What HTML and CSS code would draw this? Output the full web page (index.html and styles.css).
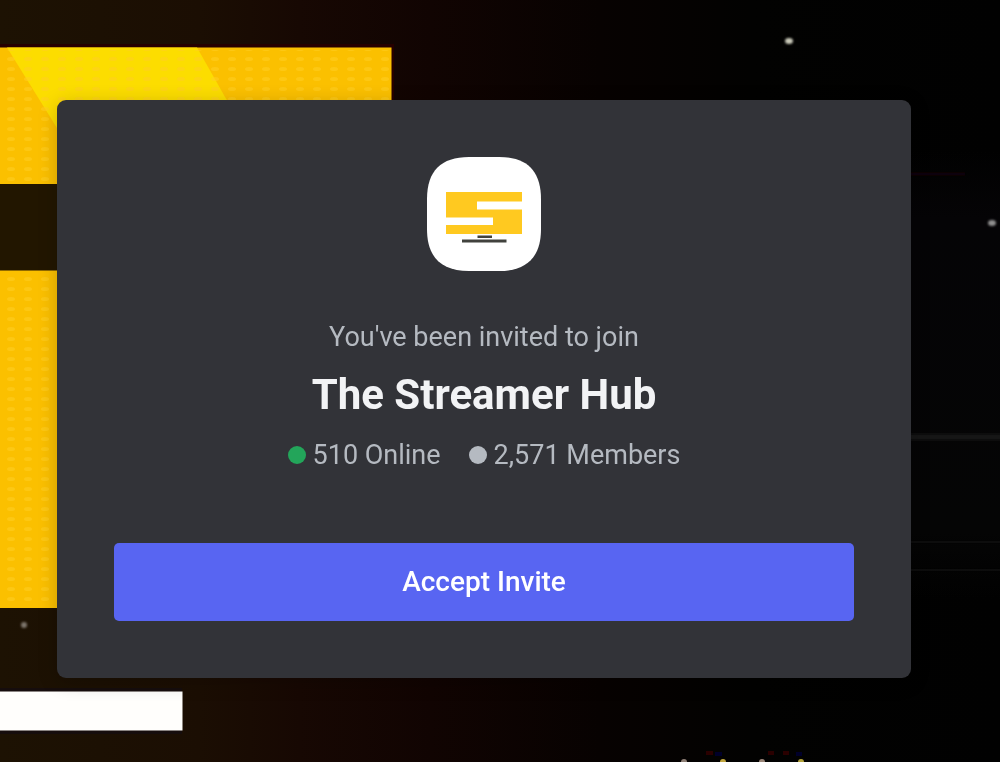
FILE: index.html
```html
<!DOCTYPE html>
<html lang="en">
<head>
<meta charset="utf-8">
<meta name="viewport" content="width=device-width, initial-scale=1">
<title>The Streamer Hub</title>
<link rel="stylesheet" href="styles.css">
</head>
<body>
<svg class="backdrop" viewBox="0 0 1000 762" preserveAspectRatio="xMinYMin slice" aria-hidden="true">
  <defs>
    <linearGradient id="night" x1="0" x2="1" y1="0" y2="0">
      <stop offset="0" stop-color="#1d1203"/>
      <stop offset="0.2" stop-color="#1b0e03"/>
      <stop offset="0.3" stop-color="#170803"/>
      <stop offset="0.43" stop-color="#110402"/>
      <stop offset="0.6" stop-color="#070201"/>
      <stop offset="0.75" stop-color="#020201"/>
      <stop offset="1" stop-color="#010101"/>
    </linearGradient>
    <linearGradient id="haze" x1="0" x2="0" y1="0" y2="1">
      <stop offset="0" stop-color="#050406" stop-opacity="0"/>
      <stop offset="0.15" stop-color="#050406"/>
      <stop offset="0.85" stop-color="#050505"/>
      <stop offset="1" stop-color="#050505" stop-opacity="0"/>
    </linearGradient>
    <pattern id="dots" x="2" y="54" width="17" height="10" patternUnits="userSpaceOnUse">
      <ellipse cx="9" cy="5" rx="4" ry="2" fill="#ffcd24" opacity="0.55" filter="url(#soft)"/>
    </pattern>
    <filter id="soft"><feGaussianBlur stdDeviation="0.6"/></filter>
    <filter id="glow"><feGaussianBlur stdDeviation="1.2"/></filter>
  </defs>
  <rect width="1000" height="762" fill="url(#night)"/>
  <rect x="900" y="150" width="100" height="450" fill="url(#haze)"/>
  <g filter="url(#soft)">
    <rect x="-5" y="44" width="399" height="142" fill="#250500"/>
    <path d="M-5 47.500H391.500V184H-5Z" fill="#fbc002"/>
    <path d="M7 47.500H197L229 104L110 184L57 128Z" fill="#fcdd00"/>
    <rect x="-5" y="184" width="70" height="87" fill="#241403"/>
    <rect x="-5" y="270.500" width="90" height="337.500" fill="#fbc002"/>
    <rect x="-5" y="688" width="187" height="46" fill="#150a08"/>
    <rect x="-5" y="691.500" width="187.500" height="39" fill="#fffefc"/>
  </g>
  <rect y="50" width="389" height="132" fill="url(#dots)"/>
  <rect y="273" width="80" height="332" fill="url(#dots)"/>
  <g filter="url(#glow)">
    <ellipse cx="789" cy="41" rx="4" ry="3" fill="#c9c9b8"/>
    <ellipse cx="992" cy="223" rx="4" ry="3" fill="#909090"/>
    <circle cx="24" cy="625" r="3" fill="#7d746c"/>
    <path d="M900 437H1010" stroke="#171616" stroke-width="6"/>
    <path d="M900 542H1010M900 570H1010" stroke="#111" stroke-width="2"/>
    <path d="M900 174H965" stroke="#0e0607" stroke-width="3"/>
  </g>
  <g filter="url(#soft)">
    <circle cx="684" cy="762" r="3" fill="#8e7f75"/>
    <circle cx="723" cy="762" r="3" fill="#c1a63c"/>
    <circle cx="762" cy="762" r="3" fill="#9a8678"/>
    <circle cx="801" cy="762" r="3" fill="#b4a43b"/>
    <path d="M706 753H713M768 753H774M783 753H789" stroke="#2c0306" stroke-width="4"/>
    <path d="M715 754H722M796 754H802" stroke="#03062c" stroke-width="4"/>
  </g>
</svg>
<main class="page">
  <section class="invite" aria-labelledby="server-name">
    <svg class="server-icon" viewBox="0 0 114 114" role="img" aria-label="The Streamer Hub icon">
      <path d="M0 42C0 14 14 0 42 0H72C100 0 114 14 114 42V72C114 100 100 114 72 114H42C14 114 0 100 0 72Z" fill="#fff"/>
      <path d="M19 35H95V44.500H50V52.500H95V77H19V68H66V60.500H19Z" fill="#ffc920"/>
      <path d="M50.500 78.500H65V81H50.500ZM35 82.500H79.500V85.500H35Z" fill="#41423d"/>
    </svg>
    <p class="lead">You've been invited to join</p>
    <h1 class="name" id="server-name">The Streamer Hub</h1>
    <ul class="stats">
      <li class="stat stat-online">510 Online</li>
      <li class="stat stat-members">2,571 Members</li>
    </ul>
    <button class="accept" type="button">Accept Invite</button>
  </section>
</main>
</body>
</html>
```
FILE: styles.css
```css
* {
  box-sizing: border-box;
}

body {
  margin: 0;
  background: #010101;
  font-family: Roboto, "Noto Sans", sans-serif;
}

.backdrop {
  position: fixed;
  inset: 0;
  z-index: -1;
  width: 100%;
  height: 100%;
}

.page {
  padding: 100px 89px 84px 57px;
}

.invite {
  display: flex;
  flex-direction: column;
  align-items: center;
  padding: 57px;
  border-radius: 9px;
  background: #323338;
  box-shadow: 0 4px 20px rgba(0, 0, 0, 0.2);
  color: #b5bac1;
  text-align: center;
}

.server-icon {
  width: 114px;
  height: 114px;
}

.lead {
  margin: 48px 0 0;
  font-size: 27px;
  line-height: 36px;
}

.name {
  margin: 14px 0 0;
  color: #f2f3f5;
  font-size: 42px;
  font-weight: 700;
  line-height: 52px;
}

.stats {
  display: flex;
  flex-wrap: wrap;
  justify-content: center;
  column-gap: 28px;
  margin: 16px 0 0;
  padding: 0;
  list-style: none;
}

.stat {
  display: flex;
  align-items: center;
  gap: 7px;
  font-size: 27px;
  line-height: 36px;
}

.stat::before {
  width: 18px;
  height: 18px;
  border-radius: 50%;
  background: #b5bac1;
  content: "";
}

.stat-online::before {
  background: #23a55a;
}

.accept {
  align-self: stretch;
  margin-top: 70px;
  padding: 21px 16px;
  border: 0;
  border-radius: 5px;
  background: #5865f2;
  color: #fff;
  font-family: inherit;
  font-size: 28px;
  font-weight: 500;
  line-height: 36px;
  cursor: pointer;
}
```
